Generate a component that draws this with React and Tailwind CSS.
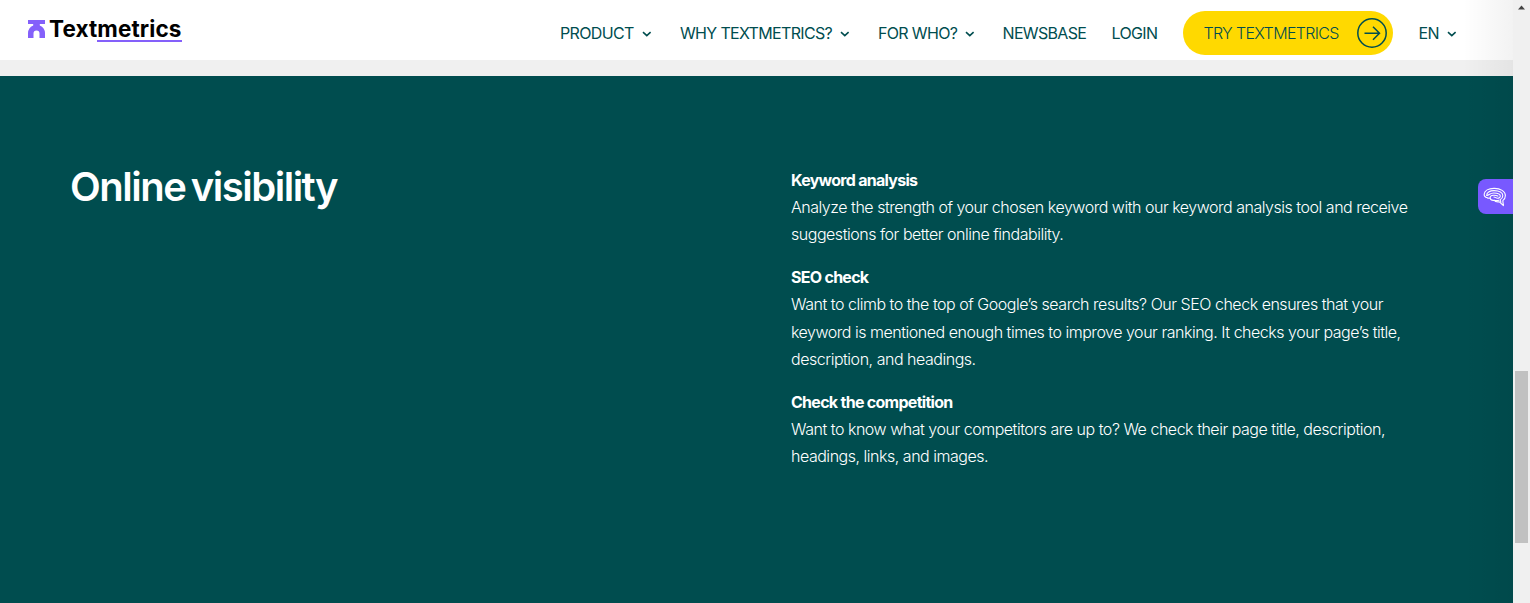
const navItems = [
  { label: 'PRODUCT', menu: true, box: 'w-[120px]', text: 'w-[74px]' },
  { label: 'WHY TEXTMETRICS?', menu: true, box: 'w-[198px]', text: 'w-[152px]' },
  { label: 'FOR WHO?', menu: true, box: 'w-[124.500px]', text: 'w-[79px]' },
  { label: 'NEWSBASE', menu: false, box: 'w-[109px]', text: 'w-[84px]' },
  { label: 'LOGIN', menu: false, box: 'w-[71.500px]', text: 'w-[46px]' },
]

const features = [
  {
    title: 'Keyword analysis',
    body: 'Analyze the strength of your chosen keyword with our keyword analysis tool and receive suggestions for better online findability.',
  },
  {
    title: 'SEO check',
    body: 'Want to climb to the top of Google’s search results? Our SEO check ensures that your keyword is mentioned enough times to improve your ranking. It checks your page’s title, description, and headings.',
  },
  {
    title: 'Check the competition',
    body: 'Want to know what your competitors are up to? We check their page title, description, headings, links, and images.',
  },
]

function Chevron() {
  return (
    <svg className="ml-2 mt-0.5 h-[10px] w-[10px] shrink-0" viewBox="0 0 10 10" fill="none" stroke="currentColor" strokeWidth="1.6">
      <path d="M1 3.2 4.800 6.600 8.600 3.200" />
    </svg>
  )
}

function Logo() {
  return (
    <a href="#" className="ml-7 flex h-[26px] w-[156px] shrink-0 items-start">
      <svg className="mt-[4px] h-[18px] w-[17px] shrink-0" viewBox="0 0 17 18" fill="#8460fa">
        <path d="M0 0h17v4h-5.200v1.400A8.600 8.600 0 0 1 17 13v5h-5.500v-4.500a3 3 0 0 0-6 0V18H0v-5a8.600 8.600 0 0 1 5.200-7.600V4H0z" />
      </svg>
      <span className="ml-[4px] whitespace-nowrap text-[22.5px] leading-[26px] font-bold tracking-[0.12px] text-black">
        Text
        <span className="inline-block h-[26px] border-b-2 border-[#8460fa]">metrics</span>
      </span>
    </a>
  )
}

function Header() {
  return (
    <header className="flex h-[60px] items-start bg-white pt-[11px]">
      <div className="mt-[5px] w-[560px] shrink-0">
        <Logo />
      </div>

      <nav className="flex h-11 items-center text-base tracking-[-0.66px] text-[#004d4f]">
        {navItems.map((item) => (
          <a key={item.label} href="#" className={`flex shrink-0 items-center ${item.box}`}>
            <span className={`whitespace-nowrap ${item.text}`}>{item.label}</span>
            {item.menu && <Chevron />}
          </a>
        ))}

        <a href="#" className="flex h-11 w-[210px] shrink-0 items-center rounded-full bg-[#ffd900] pl-[20.5px] font-light">
          <span className="w-[153.500px] whitespace-nowrap">TRY TEXTMETRICS</span>
          <svg className="h-[30px] w-[30px]" viewBox="0 0 30 30" fill="none" stroke="currentColor" strokeWidth="1.5">
            <circle cx="15" cy="15" r="14.2" />
            <path d="M7.500 15.300h15M16 8.800l6.500 6.500-6.500 6.500" />
          </svg>
        </a>

        <a href="#" className="ml-[25.5px] flex items-center">
          <span className="w-5">EN</span>
          <Chevron />
        </a>
      </nav>
    </header>
  )
}

function BrainTab() {
  return (
    <button className="absolute top-[179px] right-0 flex h-[35px] w-[35px] items-center rounded-l-lg bg-[#7859ff] pl-[5px]">
      <svg className="h-[22px] w-[25px]" viewBox="0 0 25 22" fill="none" stroke="#fff" strokeWidth="1.1" strokeLinecap="round" strokeLinejoin="round">
        <path d="M4.300 11.800C2 11.300 1 9.800 1.200 8 1.500 4.800 5.500 2.500 11 2.400c6.600-.1 11.300 3 11.400 7.200 0 2.300-1 3.900-2.600 5l.6 5-4-3.800c-2.600.3-4.500-.2-5.200-1.500-2.300.3-3.700-.5-4-2.200-1.200.3-2.400.1-2.900-.3z" />
        <path d="M3.800 9.400c-.4-2.800 2.900-4.800 7.200-4.800 5.200 0 8.800 2.100 8.800 5.200 0 1.900-1.100 3.200-2.700 4l.8 2.400" />
        <path d="M3.800 9.400c2.200.2 2.800-2.400 7-2.400 3.800 0 6.500 1.100 6.500 3.100 0 1.500-1.400 2.200-3 2.100-1.500 0-1.700-1.200-3.400-1.200" />
        <path d="M7.200 12c-.4-1.600.9-2.600 3.200-2.800 1.700-.1 3.200.2 4.400.9M11.200 14.300c1.800.4 3.200.5 4.700-.1" />
      </svg>
    </button>
  )
}

function Scrollbar() {
  return (
    <div className="flex w-[17px] shrink-0 flex-col items-center bg-[#f0f0f0]">
      <svg className="mt-[5px] h-[5px] w-[7px]" viewBox="0 0 7 5" fill="#444">
        <path d="M0 4.500 3.500.5 7 4.500z" />
      </svg>
      <div className="mt-[361px] h-[172px] w-[13px] bg-[#c1c1c1]" />
    </div>
  )
}

export default function App() {
  return (
    <div className="flex h-[603px] w-[1530px] overflow-hidden font-['Inter',sans-serif]">
      <div className="relative w-[1513px] shrink-0">
        <Header />
        <div className="h-4 bg-[#f0f0f0]" />

        <main className="flex h-[527px] bg-[#004d4f] pt-[90.8px] pl-[70px] text-white">
          <h2 className="w-[721px] shrink-0 text-[40px] leading-[39.500px] font-semibold tracking-[-1.5px] [word-spacing:-3px]">
            Online visibility
          </h2>

          <div className="w-[640px] space-y-4 text-base leading-[27.16px] tracking-[-0.475px]">
            {features.map((feature) => (
              <div key={feature.title}>
                <h3 className="font-bold tracking-[-0.72px]">{feature.title}</h3>
                <p className="font-light">{feature.body}</p>
              </div>
            ))}
          </div>
        </main>

        <div className="pointer-events-none absolute inset-y-0 right-0 w-[50px] bg-linear-to-r from-black/0 to-black/5" />
        <BrainTab />
      </div>
      <Scrollbar />
    </div>
  )
}
